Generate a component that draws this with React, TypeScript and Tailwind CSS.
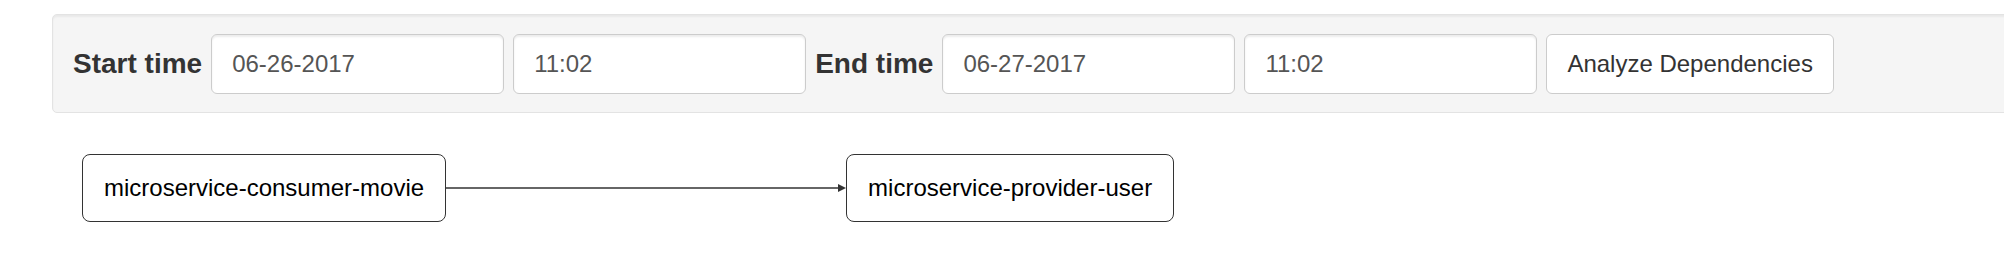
export default function App() {
  return (
    <div className="h-[270px] w-[2004px] overflow-hidden bg-white font-['Liberation_Sans',Arial,sans-serif]">
      <div className="pl-[52px] pt-[14px]">
        <QueryForm />
      </div>
      <div className="mt-[41px] flex items-center pl-[82px]">
        <ServiceNode name="microservice-consumer-movie" />
        <Edge />
        <ServiceNode name="microservice-provider-user" />
      </div>
    </div>
  )
}

function QueryForm() {
  return (
    <form className="flex h-[99px] w-[2100px] shrink-0 items-center gap-[9px] rounded-[5px] border border-[#e3e3e3] bg-[#f5f5f5] pl-[20px] shadow-[inset_0_2px_2px_rgba(0,0,0,0.05)]">
      <label className="text-[28px] font-bold leading-none text-[#333]">Start time</label>
      <TextInput value="06-26-2017" />
      <TextInput value="11:02" />
      <label className="text-[28px] font-bold leading-none text-[#333]">End time</label>
      <TextInput value="06-27-2017" />
      <TextInput value="11:02" />
      <button
        type="button"
        className="h-[60px] rounded-[6px] border border-[#ccc] bg-white px-[20px] text-[24px] text-[#333]"
      >
        Analyze Dependencies
      </button>
    </form>
  )
}

function TextInput({ value }: { value: string }) {
  return (
    <input
      defaultValue={value}
      className="h-[60px] w-[293px] rounded-[6px] border border-[#ccc] bg-white px-[20px] text-[24px] text-[#555] shadow-[inset_0_2px_2px_rgba(0,0,0,0.075)] outline-none"
    />
  )
}

function ServiceNode({ name }: { name: string }) {
  return (
    <div className="flex h-[68px] items-center whitespace-nowrap rounded-[8px] border-[1.5px] border-[#333] bg-white px-[21px] text-[24px] text-black">
      {name}
    </div>
  )
}

function Edge() {
  return (
    <svg width="400" height="68" viewBox="0 0 400 68" className="block shrink-0">
      <line x1="0" y1="34" x2="393" y2="34" stroke="#333" strokeWidth="1.5" />
      <path d="M392 30 L400 34 L392 38 Z" fill="#333" />
    </svg>
  )
}
